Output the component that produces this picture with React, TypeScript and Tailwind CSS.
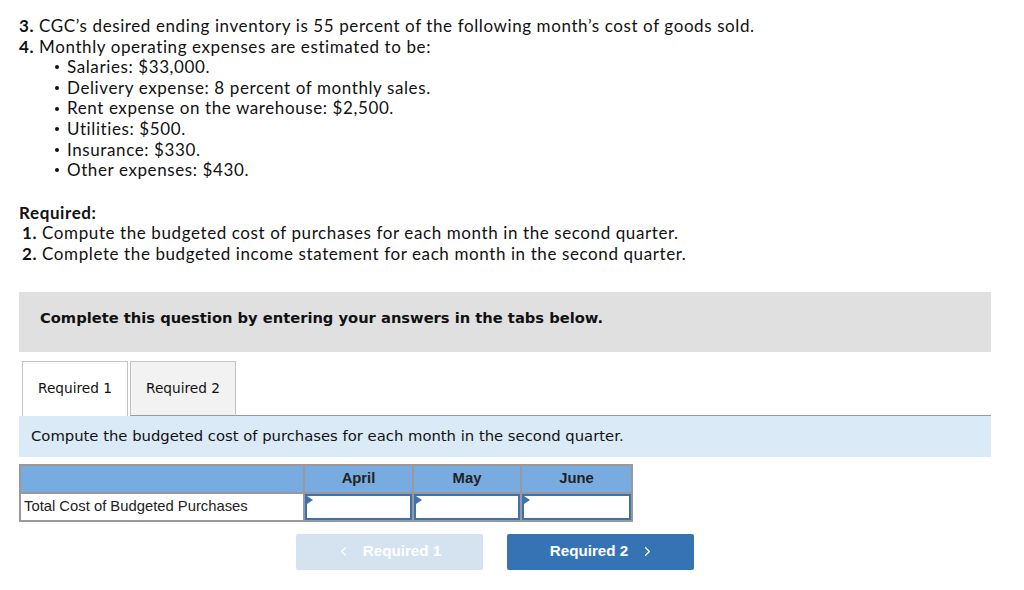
import { ChevronLeft, ChevronRight } from 'lucide-react'

const expenses = [
  'Salaries: $33,000.',
  'Delivery expense: 8 percent of monthly sales.',
  'Rent expense on the warehouse: $2,500.',
  'Utilities: $500.',
  'Insurance: $330.',
  'Other expenses: $430.',
]

const months = ['April', 'May', 'June']

function InputCell() {
  return (
    <div className="relative h-full border-2 border-[#3b72b4] bg-white">
      <span className="absolute left-0 top-0 h-0 w-0 border-y-[4px] border-l-[6px] border-y-transparent border-l-[#3b72b4]" />
    </div>
  )
}

export default function App() {
  return (
    <div className="min-h-[590px] w-[1024px] bg-white text-[#111]">
      {/* Problem text */}
      <div className="pl-[19px] pt-[16px] font-['Lato',sans-serif] text-[17px] leading-[20.6px] tracking-[0.6px]">
        <p><b className="font-bold">3.</b> CGC’s desired ending inventory is 55 percent of the following month’s cost of goods sold.</p>
        <p><b className="font-bold">4.</b> Monthly operating expenses are estimated to be:</p>
        <ul className="pl-[36px]">
          {expenses.map(e => (
            <li key={e} className="flex items-center">
              <span className="mr-[8px] inline-block h-[4px] w-[4px] rounded-full bg-[#111]" />
              <span>{e}</span>
            </li>
          ))}
        </ul>

        <p className="mt-[22px] font-bold">Required:</p>
        <p className="pl-[3px]"><b className="font-bold">1.</b> Compute the budgeted cost of purchases for each month in the second quarter.</p>
        <p className="pl-[3px]"><b className="font-bold">2.</b> Complete the budgeted income statement for each month in the second quarter.</p>
      </div>

      <div className="ml-[19px] mr-[33px] mt-[27px]">
        {/* Instruction box */}
        <div className="h-[60px] bg-[#e0e0e0] pl-[21px] pt-[16px] font-['DejaVu_Sans',sans-serif] text-[14.7px] font-bold leading-[20px]">
          Complete this question by entering your answers in the tabs below.
        </div>

        {/* Tabs */}
        <div className="mt-[9px] flex items-end pl-[3px] font-['DejaVu_Sans',sans-serif] text-[13.7px]">
          <div className="flex h-[55px] w-[106px] items-center justify-center border border-b-0 border-[#c4c4c4] bg-white">
            Required 1
          </div>
          <div className="flex flex-1 items-end pl-[2px]">
            <div className="flex h-[55px] w-[106px] items-center justify-center border border-[#c4c4c4] border-b-[#999] bg-[#f2f2f2]">
              Required 2
            </div>
            <div className="flex-1 border-b border-[#999]" />
          </div>
        </div>

        <div className="flex h-[41px] items-center bg-[#dbeaf7] pl-[12px] font-['DejaVu_Sans',sans-serif] text-[14.8px]">
          Compute the budgeted cost of purchases for each month in the second quarter.
        </div>

        {/* Table */}
        <div className="mt-[7px] grid w-[614px] grid-cols-[282px_109px_108px_111px] border-2 border-[#999] font-['Liberation_Sans',Arial,sans-serif] text-[14.8px]">
          <div className="h-[28px] border-b-2 border-[#999] bg-[#78ace1]" />
          {months.map(m => (
            <div key={m} className="flex h-[28px] items-center justify-center border-b-2 border-l-2 border-[#999] bg-[#78ace1] font-bold text-[#222]">
              {m}
            </div>
          ))}
          <div className="flex h-[26px] items-center pl-[3px] text-[#222]">Total Cost of Budgeted Purchases</div>
          {months.map(m => (
            <div key={m} className="h-[26px] border-l-2 border-[#999]">
              <InputCell />
            </div>
          ))}
        </div>

        {/* Nav buttons */}
        <div className="ml-[277px] mt-[12px] flex gap-[24px] font-['Liberation_Sans',Arial,sans-serif] text-[15.2px] font-bold text-white">
          <button className="flex h-[36px] w-[187px] items-center justify-center gap-[12px] rounded-[2px] bg-[#d5e3f0] pr-[2px]">
            <ChevronLeft size={15} strokeWidth={2} />
            Required 1
          </button>
          <button className="flex h-[36px] w-[187px] items-center justify-center gap-[12px] rounded-[2px] bg-[#3673b5] pl-[4px]">
            Required 2
            <ChevronRight size={15} strokeWidth={2} />
          </button>
        </div>
      </div>
    </div>
  )
}
